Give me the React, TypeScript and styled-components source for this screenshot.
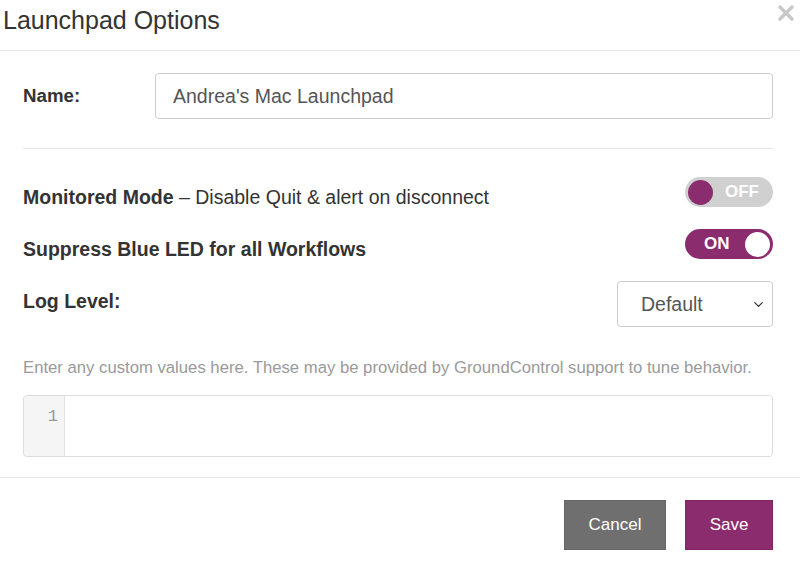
import { useState } from 'react';
import styled, { createGlobalStyle } from 'styled-components';
import { ChevronDown, X } from 'lucide-react';

const Colors = {
	Plum: '#8b2c6e',
	Slate: '#6f6f6f',
	Ink: '#333333',
	Muted: '#9a9a9a',
	Line: '#e5e5e5',
	Border: '#cccccc',
	Track: '#d0d0d0',
};

const GlobalStyle = createGlobalStyle`
	body {
		margin: 0;
		background: #fff;
		font-family: 'Liberation Sans', Arial, sans-serif;
		color: ${Colors.Ink};
	}
	* {
		box-sizing: border-box;
	}
`;

const Modal = styled.div`
	width: 800px;
	height: 563px;
	display: flex;
	flex-direction: column;
	background: #fff;
`;

const Header = styled.div`
	height: 51px;
	display: flex;
	align-items: flex-start;
	justify-content: space-between;
	padding: 5px 2px 0 3px;
	border-bottom: 1px solid ${Colors.Line};

	h4 {
		margin: 0;
		font-weight: normal;
		font-size: 25px;
		line-height: 30px;
		color: ${Colors.Ink};
	}
`;

const Close = styled.button`
	display: flex;
	border: none;
	background: none;
	padding: 0;
	margin-top: -4px;
	color: #c8c8c8;
	cursor: pointer;
`;

const Body = styled.div`
	padding: 22px 27px 20px 23px;
	border-bottom: 1px solid ${Colors.Line};
`;

const FieldRow = styled.div`
	display: flex;
	align-items: center;

	label {
		width: 132px;
		font-size: 18.7px;
		font-weight: bold;
	}
`;

const TextInput = styled.input`
	flex: 1;
	height: 46px;
	padding: 0 17px;
	border: 1px solid ${Colors.Border};
	border-radius: 4px;
	font-family: 'Liberation Sans', Arial, sans-serif;
	font-size: 19.5px;
	color: #555;
	outline: none;
`;

const Divider = styled.hr`
	border: none;
	border-top: 1px solid ${Colors.Line};
	margin: 29px 0 28px;
`;

const OptionList = styled.div`
	display: flex;
	flex-direction: column;
	gap: 22px;
`;

const OptionRow = styled.div`
	display: flex;
	align-items: flex-start;
	justify-content: space-between;
`;

const OptionLabel = styled.span`
	padding-top: 10px;
	font-size: 19.5px;
	line-height: 20px;

	b {
		font-weight: bold;
	}
`;

const Toggle = styled.button<{ $on: boolean }>`
	position: relative;
	width: 88px;
	height: 30px;
	border: none;
	border-radius: 15px;
	cursor: pointer;
	background: ${(p) => (p.$on ? Colors.Plum : Colors.Track)};
	color: #fff;
	font-family: 'Liberation Sans', Arial, sans-serif;
	font-weight: bold;
	font-size: 17px;
	text-align: ${(p) => (p.$on ? 'left' : 'right')};
	padding: ${(p) => (p.$on ? '0 0 0 19px' : '0 14px 0 0')};

	&::after {
		content: '';
		position: absolute;
		top: 2.5px;
		left: ${(p) => (p.$on ? '60px' : '3px')};
		width: 25px;
		height: 25px;
		border-radius: 50%;
		background: ${(p) => (p.$on ? '#fff' : Colors.Plum)};
	}
`;

const SelectWrap = styled.div`
	position: relative;
	width: 156px;
	height: 46px;

	svg {
		position: absolute;
		right: 7px;
		top: 16px;
		color: #333;
		pointer-events: none;
	}
`;

const Select = styled.select`
	appearance: none;
	width: 100%;
	height: 100%;
	padding: 0 0 0 23px;
	border: 1px solid ${Colors.Border};
	border-radius: 4px;
	background: #fff;
	font-family: 'Liberation Sans', Arial, sans-serif;
	font-size: 19.5px;
	color: #555;
`;

const Hint = styled.p`
	margin: 31px 0 17px;
	font-size: 16.7px;
	line-height: 20px;
	color: ${Colors.Muted};
`;

const Editor = styled.div`
	display: flex;
	height: 62px;
	border: 1px solid #dcdcdc;
	border-radius: 4px;
	overflow: hidden;
`;

const Gutter = styled.div`
	width: 41px;
	background: #f5f5f5;
	border-right: 1px solid #e2e2e2;
	text-align: right;
	padding: 11px 6px 0 0;
	font-family: 'Liberation Mono', 'DejaVu Sans Mono', monospace;
	font-size: 17px;
	color: #999;
`;

const Code = styled.textarea`
	flex: 1;
	border: none;
	resize: none;
	outline: none;
	padding: 10px 8px;
	font-family: 'Liberation Mono', monospace;
	font-size: 16px;
`;

const Footer = styled.div`
	display: flex;
	justify-content: flex-end;
	gap: 19px;
	padding: 22px 27px 0 0;
`;

const Button = styled.button<{ $primary?: boolean }>`
	height: 50px;
	width: ${(p) => (p.$primary ? '88px' : '102px')};
	border: 1px solid ${(p) => (p.$primary ? '#7d2462' : '#666')};
	background: ${(p) => (p.$primary ? Colors.Plum : Colors.Slate)};
	color: #fff;
	font-family: 'Liberation Sans', Arial, sans-serif;
	font-size: 17px;
	cursor: pointer;
`;

export default function App() {
	const [name, setName] = useState("Andrea's Mac Launchpad");
	const [monitored, setMonitored] = useState(false);
	const [suppressLed, setSuppressLed] = useState(true);

	return (
		<Modal>
			<GlobalStyle />
			<Header>
				<h4>Launchpad Options</h4>
				<Close aria-label='Close'>
					<X size={24} strokeWidth={3.4} />
				</Close>
			</Header>
			<Body>
				<FieldRow>
					<label>Name:</label>
					<TextInput value={name} onChange={(e) => setName(e.target.value)} />
				</FieldRow>
				<Divider />
				<OptionList>
					<OptionRow>
						<OptionLabel>
							<b>Monitored Mode</b> – Disable Quit &amp; alert on disconnect
						</OptionLabel>
						<Toggle $on={monitored} onClick={() => setMonitored((v) => !v)}>
							{monitored ? 'ON' : 'OFF'}
						</Toggle>
					</OptionRow>
					<OptionRow>
						<OptionLabel>
							<b>Suppress Blue LED for all Workflows</b>
						</OptionLabel>
						<Toggle $on={suppressLed} onClick={() => setSuppressLed((v) => !v)}>
							{suppressLed ? 'ON' : 'OFF'}
						</Toggle>
					</OptionRow>
					<OptionRow>
						<OptionLabel>
							<b>Log Level:</b>
						</OptionLabel>
						<SelectWrap>
							<Select defaultValue='default'>
								<option value='default'>Default</option>
								<option value='debug'>Debug</option>
								<option value='verbose'>Verbose</option>
							</Select>
							<ChevronDown size={15} strokeWidth={2} />
						</SelectWrap>
					</OptionRow>
				</OptionList>
				<Hint>
					Enter any custom values here. These may be provided by GroundControl support to tune
					behavior.
				</Hint>
				<Editor>
					<Gutter>1</Gutter>
					<Code spellCheck={false} />
				</Editor>
			</Body>
			<Footer>
				<Button>Cancel</Button>
				<Button $primary>Save</Button>
			</Footer>
		</Modal>
	);
}
